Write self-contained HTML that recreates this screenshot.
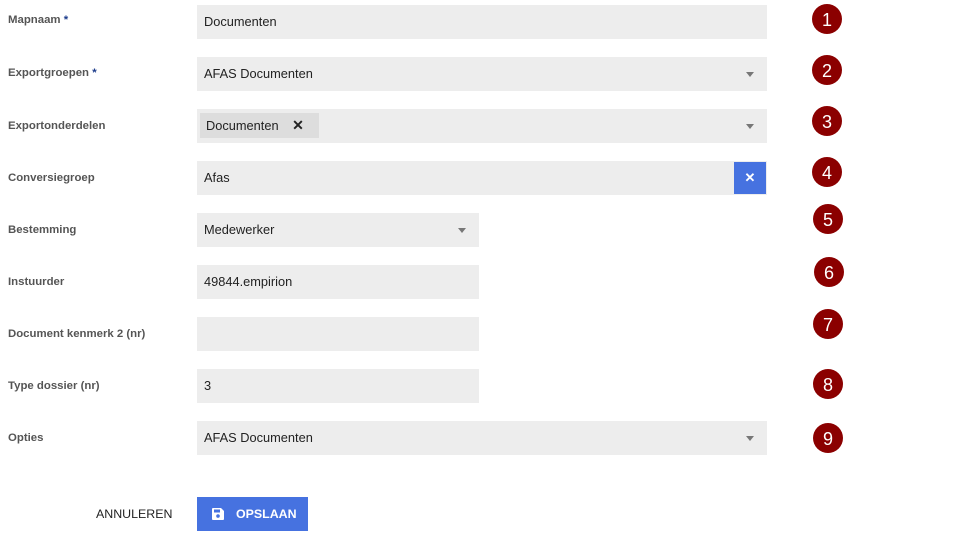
<!DOCTYPE html>
<html><head><style>
body{margin:0;width:958px;height:548px;background:#fff;font-family:"Liberation Sans",sans-serif;position:relative;overflow:hidden}
.l{position:absolute;left:8px;font-size:11.4px;font-weight:bold;color:#555}
.l b{color:#1a3a8a}
.f{position:absolute;left:197px;height:34px;background:#ededed;font-size:12.8px;color:#222;line-height:34px;box-sizing:border-box;padding-left:7px}
.w{width:570px}.s{width:282px}
.ar{position:absolute;right:13px;top:15px;width:0;height:0;border-left:4px solid transparent;border-right:4px solid transparent;border-top:5px solid #777}
.c{position:absolute;width:30px;height:30px;border-radius:50%;background:#8b0000;color:#fff;font-size:18px;text-align:center;line-height:32px}
</style></head><body>
<div class="l" style="top:14px">Mapnaam <b>*</b></div>
<div class="l" style="top:67px">Exportgroepen <b>*</b></div>
<div class="l" style="top:120px">Exportonderdelen</div>
<div class="l" style="top:172px">Conversiegroep</div>
<div class="l" style="top:224px">Bestemming</div>
<div class="l" style="top:276px">Instuurder</div>
<div class="l" style="top:328px">Document kenmerk 2 (nr)</div>
<div class="l" style="top:380px">Type dossier (nr)</div>
<div class="l" style="top:432px">Opties</div>

<div class="f w" style="top:5px">Documenten</div>
<div class="f w" style="top:57px">AFAS Documenten<div class="ar"></div></div>
<div class="f w" style="top:109px;padding-left:3px"><span style="display:inline-block;background:#ddd;height:25px;line-height:25px;margin-top:4px;padding:0 15px 0 6px;vertical-align:top">Documenten <span style="font-weight:bold;margin-left:10px;font-size:14px">✕</span></span><div class="ar"></div></div>
<div class="f w" style="top:161px">Afas<div style="position:absolute;right:1px;top:1px;width:32px;height:32px;background:#4672e0;color:#fff;text-align:center;line-height:32px;font-weight:bold;font-size:13px">✕</div></div>
<div class="f s" style="top:213px">Medewerker<div class="ar"></div></div>
<div class="f s" style="top:265px">49844.empirion</div>
<div class="f s" style="top:317px"></div>
<div class="f s" style="top:369px">3</div>
<div class="f w" style="top:421px">AFAS Documenten<div class="ar"></div></div>

<div class="c" style="left:812px;top:4px">1</div>
<div class="c" style="left:812px;top:55px">2</div>
<div class="c" style="left:812px;top:106px">3</div>
<div class="c" style="left:812px;top:157px">4</div>
<div class="c" style="left:813px;top:204px">5</div>
<div class="c" style="left:814px;top:257px">6</div>
<div class="c" style="left:813px;top:309px">7</div>
<div class="c" style="left:813px;top:369px">8</div>
<div class="c" style="left:813px;top:423px">9</div>

<div style="position:absolute;left:96px;top:507px;font-size:12.4px;color:#222">ANNULEREN</div>
<div style="position:absolute;left:197px;top:497px;width:111px;height:34px;background:#4672e0;color:#fff;font-size:12.4px;font-weight:bold;line-height:34px;box-sizing:border-box;padding-left:39px">OPSLAAN
<svg style="position:absolute;left:15px;top:11px" width="12" height="12" viewBox="0 0 12 12"><path d="M0 1a1 1 0 0 1 1-1h8l3 3v8a1 1 0 0 1-1 1H1a1 1 0 0 1-1-1z" fill="#fff"/><rect x="2" y="1.5" width="6" height="3" fill="#4672e0"/><circle cx="6" cy="8" r="1.8" fill="#4672e0"/></svg></div>
</body></html>
